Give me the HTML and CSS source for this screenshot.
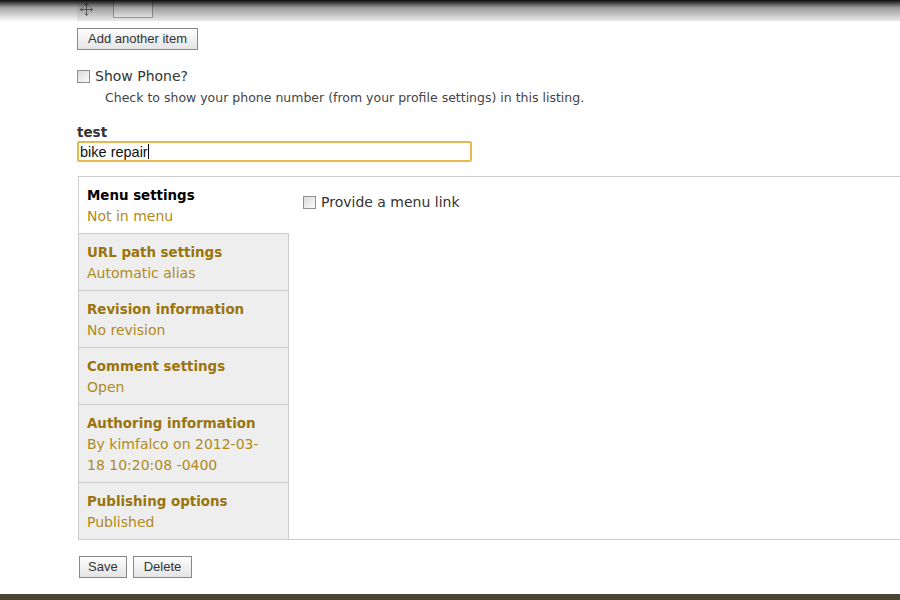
FILE: index.html
```html
<!DOCTYPE html>
<html lang="en">
<head>
  <meta charset="UTF-8">
  <title>Edit listing</title>
  <link rel="stylesheet" href="styles.css">
</head>
<body>

<div class="top-shadow"></div>

<div class="page">
  <div class="field-row">
    <span class="drag-handle">
      <svg width="13" height="13" viewBox="0 0 13 13">
        <path d="M6.5 0.5v12M0.5 6.5h12M4.5 2.5l2-2 2 2M4.5 10.5l2 2 2-2M2.5 4.5l-2 2 2 2M10.5 4.5l2 2-2 2" stroke="#777" fill="none" stroke-width="1"/>
      </svg>
    </span>
    <span class="mini-input"></span>
  </div>

  <button class="btn btn-add">Add another item</button>

  <div class="check-item">
    <label><span class="checkbox"></span>Show Phone?</label>
    <div class="description">Check to show your phone number (from your profile settings) in this listing.</div>
  </div>

  <div class="text-field">
    <label class="field-label">test</label>
    <div class="text-input">bike repair<span class="caret"></span></div>
  </div>

  <div class="vertical-tabs">
    <ul class="tab-list">
      <li class="tab active">
        <strong>Menu settings</strong>
        <span class="summary">Not in menu</span>
      </li>
      <li class="tab">
        <strong>URL path settings</strong>
        <span class="summary">Automatic alias</span>
      </li>
      <li class="tab">
        <strong>Revision information</strong>
        <span class="summary">No revision</span>
      </li>
      <li class="tab">
        <strong>Comment settings</strong>
        <span class="summary">Open</span>
      </li>
      <li class="tab">
        <strong>Authoring information</strong>
        <span class="summary">By kimfalco on 2012-03-18 10:20:08 -0400</span>
      </li>
      <li class="tab last">
        <strong>Publishing options</strong>
        <span class="summary">Published</span>
      </li>
    </ul>
    <div class="tab-pane">
      <label><span class="checkbox"></span>Provide a menu link</label>
    </div>
  </div>

  <div class="actions">
    <button class="btn">Save</button>
    <button class="btn btn-delete">Delete</button>
  </div>
</div>

<div class="footer-bar"></div>

</body>
</html>
```

FILE: styles.css
```css
html, body {
  margin: 0;
  padding: 0;
  height: 100%;
  overflow: hidden;
  background: #fff;
}

body {
  font-family: "DejaVu Sans", Verdana, sans-serif;
  color: #333;
  position: relative;
}

.top-shadow {
  position: absolute;
  top: 0;
  left: 0;
  right: 0;
  height: 22px;
  background: linear-gradient(rgba(0, 0, 0, 0.95), rgba(0, 0, 0, 0.35) 35%, rgba(0, 0, 0, 0) 100%);
  z-index: 5;
}

.page {
  padding-left: 77px;
}

.field-row {
  height: 21px;
  background: #eee;
  display: flex;
  align-items: flex-start;
}

.drag-handle {
  margin: 1px 0 0 3px;
  width: 13px;
  height: 13px;
}

.mini-input {
  margin-left: 20px;
  width: 38px;
  height: 17px;
  border: 1px solid #aaa;
  border-top: none;
  background: #fff;
}

.btn {
  font-family: "Liberation Sans", Arial, sans-serif;
  font-size: 13px;
  color: #333;
  background: linear-gradient(#fdfdfd, #e4e4e4);
  border: 1px solid #888;
  padding: 2px 8px;
  height: 22px;
  line-height: 16px;
  cursor: pointer;
}

.btn-delete {
  padding: 2px 10px;
}

.btn-add {
  display: block;
  margin-top: 7px;
  width: 121px;
  padding: 2px 0;
}

.check-item {
  margin-top: 17px;
}

.check-item label {
  display: flex;
  align-items: center;
  font-size: 14px;
  color: #333;
  height: 18px;
}

.checkbox {
  display: inline-block;
  box-sizing: border-box;
  width: 13px;
  height: 13px;
  border: 1px solid #8f8f8f;
  background: linear-gradient(135deg, #ddd, #fafafa);
  margin-right: 5px;
}

.description {
  font-size: 12.5px;
  color: #444;
  margin: 5px 0 0 28px;
}

.text-field {
  margin-top: 19px;
}

.field-label {
  display: block;
  font-weight: bold;
  font-size: 13.5px;
  color: #333;
  line-height: 16px;
}

.text-input {
  box-sizing: border-box;
  margin-top: 1px;
  width: 395px;
  height: 21px;
  border: 2px solid #e8b850;
  border-radius: 2px;
  font-family: "Liberation Sans", Arial, sans-serif;
  font-size: 14.5px;
  color: #111;
  padding: 1px 1px;
  line-height: 16px;
  display: flex;
  align-items: center;
}

.caret {
  display: inline-block;
  width: 1px;
  height: 15px;
  background: #000;
}

.vertical-tabs {
  margin: 14px 0 0 1px;
  border: 1px solid #ccc;
  border-right: none;
  display: flex;
}

.tab-list {
  list-style: none;
  margin: 0;
  padding: 0;
  width: 209px;
  background: #eee;
  border-right: 1px solid #ccc;
  flex-shrink: 0;
}

.tab {
  padding: 8px 14px 6px 8px;
  border-bottom: 1px solid #ccc;
  font-size: 14px;
  line-height: 21px;
  color: #a07a10;
}

.tab.last {
  border-bottom: none;
}

.tab strong {
  display: block;
  font-weight: bold;
  font-size: 13.4px;
  color: #9a740c;
}

.tab .summary {
  display: block;
  color: #b08a20;
}

.tab.active {
  background: #fff;
  margin-right: -1px;
}

.tab.active strong {
  color: #000;
}

.tab-pane {
  padding: 17px 14px;
}

.tab-pane label {
  display: flex;
  align-items: center;
  font-size: 14px;
  color: #333;
}

.actions {
  margin: 16px 0 0 2px;
  display: flex;
  gap: 6px;
}

.footer-bar {
  position: absolute;
  left: 0;
  right: 0;
  bottom: 0;
  height: 6px;
  background: #4b4535;
}
```
